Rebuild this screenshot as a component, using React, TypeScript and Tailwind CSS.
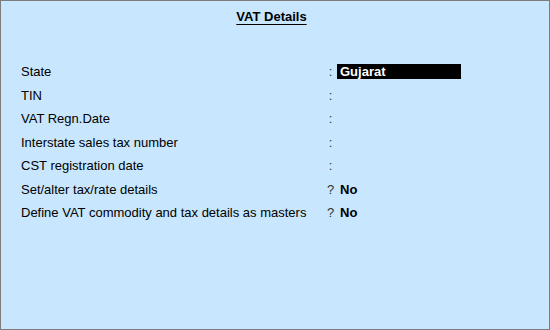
export default function App() {
  const rows: { label: string; sep: string; value?: string; box?: boolean }[] = [
    { label: "State", sep: ":", value: "Gujarat", box: true },
    { label: "TIN", sep: ":" },
    { label: "VAT Regn.Date", sep: ":" },
    { label: "Interstate sales tax number", sep: ":" },
    { label: "CST registration date", sep: ":" },
    { label: "Set/alter tax/rate details", sep: "?", value: "No" },
    { label: "Define VAT commodity and tax details as masters", sep: "?", value: "No" },
  ];
  return (
    <div className="w-[550px] h-[330px] border border-[#7c7c7c] bg-[#c8e6fe] text-black font-['Liberation_Sans',Arial,sans-serif]">
      <div className="flex justify-center pt-[8px] pr-[7px]">
        <span className="text-[13px] font-bold leading-[16px] underline decoration-1 underline-offset-[3px]">
          VAT Details
        </span>
      </div>
      <div className="mt-[35px] pl-[20px] flex flex-col">
        {rows.map((r) => (
          <div key={r.label} className="h-[23.5px] flex items-center text-[13px] leading-[15px]">
            <div className="w-[306px] whitespace-nowrap">{r.label}</div>
            <div className="w-[7px] text-center text-[#333]">{r.sep}</div>
            {r.box ? (
              <div className="ml-[3px] w-[124px] h-[15px] bg-black text-white font-bold pl-[3px] leading-[15px]">
                {r.value}
              </div>
            ) : r.value ? (
              <div className="ml-[3px] pl-[3px] font-bold">{r.value}</div>
            ) : null}
          </div>
        ))}
      </div>
    </div>
  );
}
